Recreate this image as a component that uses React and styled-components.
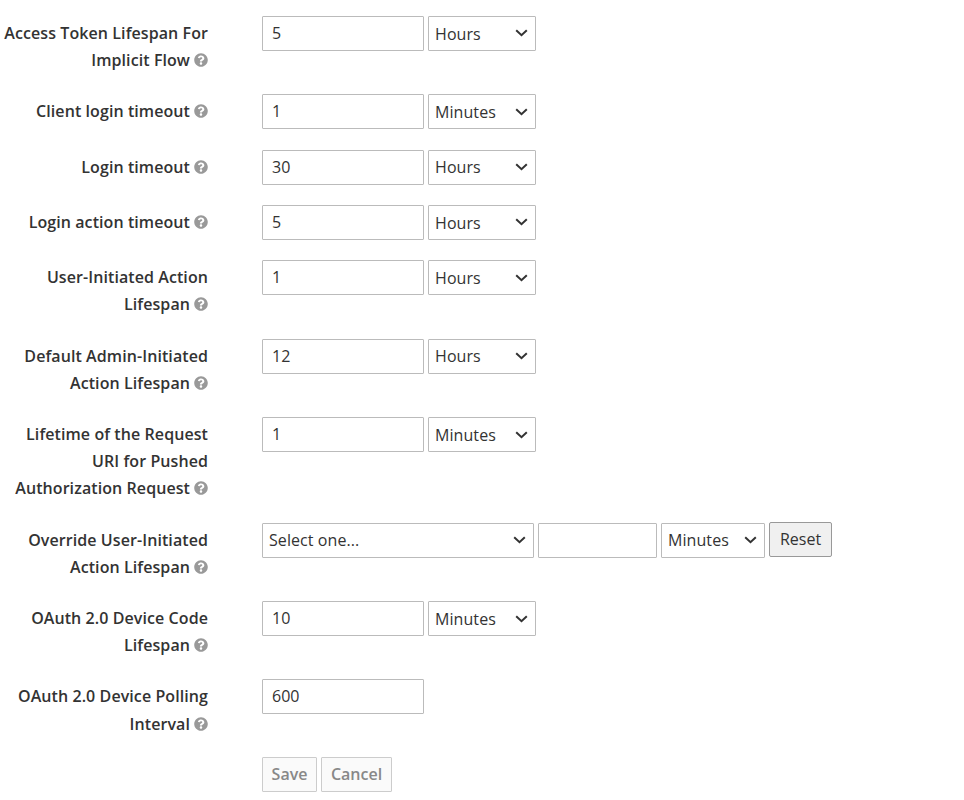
import React from "react";
import styled, { createGlobalStyle } from "styled-components";
import { FaQuestionCircle } from "react-icons/fa";

const Global = createGlobalStyle`
  html, body { margin: 0; padding: 0; background: #fff; }
  body { font-family: "Open Sans", "Liberation Sans", sans-serif; font-size: 16px; color: #333; }
`;

const chevron = encodeURIComponent(
  '<svg xmlns="http://www.w3.org/2000/svg" width="13" height="8" viewBox="0 0 13 8"><path d="M1.2 1.2 L6.5 6.2 L11.8 1.2" fill="none" stroke="#333" stroke-width="2"/></svg>'
);

const Form = styled.form`
  display: flex;
  flex-direction: column;
  padding-top: 15.9px;
  width: 964px;
`;

const Row = styled.div`
  display: grid;
  grid-template-columns: 208px 1fr;
  column-gap: 54px;
  margin-bottom: 20px;
  min-height: 35.3px;
`;

const Label = styled.label`
  padding-top: 4px;
  text-align: right;
  font-weight: 600;
  line-height: 27.2px;
  letter-spacing: 0.08px;
  color: #333;
`;

const Help = styled(FaQuestionCircle)`
  width: 14px;
  height: 14px;
  margin-left: 4px;
  vertical-align: -1px;
  color: #999;
`;

const Controls = styled.div`
  display: flex;
  align-items: flex-start;
  gap: 4px;
`;

const Input = styled.input`
  box-sizing: border-box;
  width: ${(p) => p.$width || 162}px;
  height: 35px;
  padding: 0 9px 1px;
  border: 1px solid #bbb;
  border-radius: 1px;
  background: #fff;
  font: inherit;
  color: #333;
  outline: none;
`;

const Select = styled.select`
  box-sizing: border-box;
  appearance: none;
  width: ${(p) => p.$width || 108}px;
  height: 35px;
  padding: 0.4px 24px 0 6px;
  border: 1px solid #bbb;
  border-radius: 1px;
  background: #fff url("data:image/svg+xml,${chevron}") no-repeat right 7px center;
  font: inherit;
  letter-spacing: 0.08px;
  color: #333;
  outline: none;
`;

const ResetButton = styled.button`
  box-sizing: border-box;
  width: 63px;
  height: 35px;
  margin-top: -1px;
  padding: 0 0 1px;
  border: 1px solid #999;
  border-radius: 2px;
  background: #f0f0f0;
  font: inherit;
  color: #333;
`;

const Actions = styled.div`
  display: flex;
  gap: 4px;
  margin-left: 262px;
  margin-top: -0.6px;
`;

const ActionButton = styled.button`
  box-sizing: border-box;
  height: 35px;
  width: ${(p) => p.$width}px;
  padding: 0 0 2px;
  border: 1px solid #ccc;
  border-radius: 1px;
  background: #fafafa;
  font: inherit;
  font-weight: 600;
  color: #888;
`;

const UNITS = ["Minutes", "Hours", "Days"];

const UnitSelect = ({ value, width }) => (
  <Select defaultValue={value} $width={width}>
    {UNITS.map((u) => (
      <option key={u}>{u}</option>
    ))}
  </Select>
);

const FieldLabel = ({ children }) => (
  <Label>
    {children}
    <Help />
  </Label>
);

const rows = [
  ["Access Token Lifespan For Implicit Flow", "5", "Hours"],
  ["Client login timeout", "1", "Minutes"],
  ["Login timeout", "30", "Hours"],
  ["Login action timeout", "5", "Hours"],
  ["User-Initiated Action Lifespan", "1", "Hours"],
  ["Default Admin-Initiated Action Lifespan", "12", "Hours"],
  ["Lifetime of the Request URI for Pushed Authorization Request", "1", "Minutes"],
];

const Field = ({ label, value, unit }) => (
  <Row>
    <FieldLabel>{label}</FieldLabel>
    <Controls>
      <Input defaultValue={value} />
      {unit && <UnitSelect value={unit} />}
    </Controls>
  </Row>
);

export default function App() {
  return (
    <>
      <Global />
      <Form onSubmit={(e) => e.preventDefault()}>
        {rows.map(([label, value, unit]) => (
          <Field key={label} label={label} value={value} unit={unit} />
        ))}
        <Row>
          <FieldLabel>Override User-Initiated Action Lifespan</FieldLabel>
          <Controls>
            <Select $width={272} defaultValue="Select one...">
              <option>Select one...</option>
              <option>Expires in</option>
            </Select>
            <Input $width={119} />
            <UnitSelect value="Minutes" width={104} />
            <ResetButton type="button">Reset</ResetButton>
          </Controls>
        </Row>
        <Field label="OAuth 2.0 Device Code Lifespan" value="10" unit="Minutes" />
        <Field label="OAuth 2.0 Device Polling Interval" value="600" />
        <Actions>
          <ActionButton type="button" $width={55}>Save</ActionButton>
          <ActionButton type="button" $width={71}>Cancel</ActionButton>
        </Actions>
      </Form>
    </>
  );
}
